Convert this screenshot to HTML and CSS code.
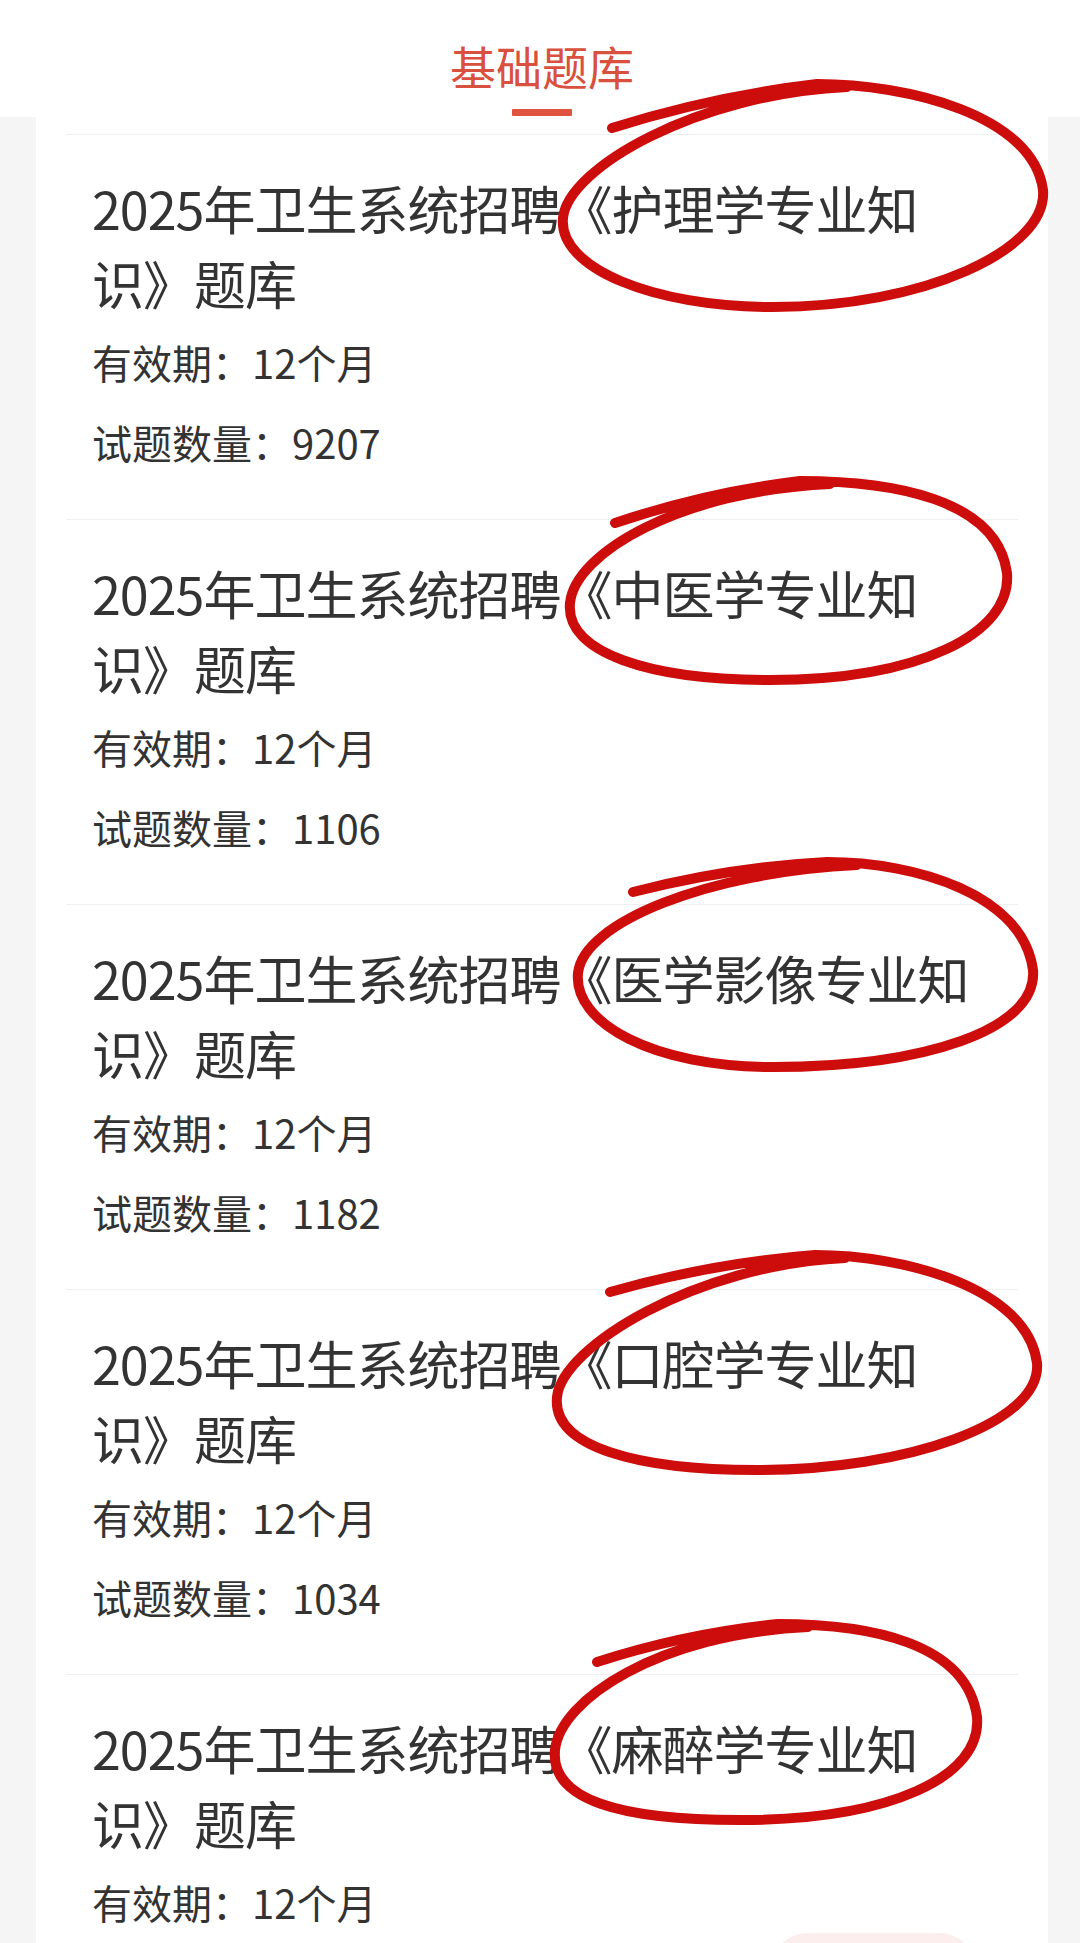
FILE: index.html
```html
<!DOCTYPE html>
<html lang="zh-CN">
<head>
<meta charset="utf-8">
<title>基础题库</title>
<link rel="stylesheet" href="styles.css">
</head>
<body>
<header class="top">
  <div class="top-title">基础题库</div>
  <div class="top-bar"></div>
</header>
<main class="card">
  <div class="item">
    <div class="item-title">2025年卫生系统招聘《护理学专业知识》题库</div>
    <div class="meta">有效期：12个月</div>
    <div class="meta">试题数量：9207</div>
  </div>
  <div class="item">
    <div class="item-title">2025年卫生系统招聘《中医学专业知识》题库</div>
    <div class="meta">有效期：12个月</div>
    <div class="meta">试题数量：1106</div>
  </div>
  <div class="item">
    <div class="item-title">2025年卫生系统招聘《医学影像专业知识》题库</div>
    <div class="meta">有效期：12个月</div>
    <div class="meta">试题数量：1182</div>
  </div>
  <div class="item">
    <div class="item-title">2025年卫生系统招聘《口腔学专业知识》题库</div>
    <div class="meta">有效期：12个月</div>
    <div class="meta">试题数量：1034</div>
  </div>
  <div class="item">
    <div class="item-title">2025年卫生系统招聘《麻醉学专业知识》题库</div>
    <div class="meta">有效期：12个月</div>
    <div class="buy"></div>
  </div>
</main>
<svg class="marks" viewBox="0 0 1080 1943" xmlns="http://www.w3.org/2000/svg">
  <g fill="none" stroke="#cd0c0c" stroke-width="10" stroke-linecap="round" stroke-linejoin="round">
    <path d="M 612 128 Q 714 96 817 84 C 907 84 1033 115 1043 190 C 1048 250 923 307 773 307 C 653 307 558 268 563 218 C 568 168 697 94 847 87"/>
    <path d="M 615 523 Q 707 492 800 481 C 890 481 997 498 1007 573 C 1012 633 920 680 770 680 C 650 680 565 653 570 603 C 575 553 680 491 830 484"/>
    <path d="M 633 892 Q 730 867 827 862 C 917 862 1023 895 1033 970 C 1038 1030 923 1067 773 1067 C 653 1067 573 1023 578 973 C 583 923 707 872 857 865"/>
    <path d="M 610 1292 Q 712 1263 815 1255 C 905 1255 1027 1288 1037 1363 C 1042 1423 907 1470 757 1470 C 637 1470 552 1447 557 1397 C 562 1347 695 1265 845 1258"/>
    <path d="M 597 1662 Q 687 1633 778 1624 C 868 1624 967 1642 977 1717 C 982 1777 890 1820 740 1820 C 620 1820 550 1800 555 1750 C 560 1700 658 1634 808 1627"/>
  </g>
</svg>
</body>
</html>
```
FILE: styles.css
```css
html, body {
  margin: 0;
  padding: 0;
  height: 1943px;
  overflow: hidden;
  background: #f5f5f5;
}
body {
  position: relative;
  font-family: "Noto Sans CJK SC", "Noto Sans", sans-serif;
  color: #333333;
}
.top {
  background: #ffffff;
  padding: 37px 32px 1px 36px;
  display: flex;
  flex-direction: column;
  align-items: center;
}
.top-title {
  font-size: 46px;
  line-height: 56px;
  color: #d9503e;
}
.top-bar {
  width: 60px;
  height: 7px;
  margin-top: 16px;
  background: #e0533f;
  border-radius: 1px;
}
.card {
  background: #ffffff;
  margin: 0 32px 0 36px;
  padding: 17px 30px 0;
  height: 1900px;
}
.item {
  position: relative;
  border-top: 1px solid #efefef;
  padding: 35px 43px 40px 26px;
}
.item-title {
  font-size: 52px;
  letter-spacing: -1px;
  line-height: 75px;
}
.meta {
  font-size: 40px;
  line-height: 74px;
}
.item-title + .meta {
  margin-top: 5px;
}
.meta + .meta {
  margin-top: 6px;
}
.buy {
  position: absolute;
  left: 706px;
  top: 258px;
  width: 203px;
  height: 70px;
  border-radius: 35px;
  background: #fdeeee;
}
.marks {
  position: absolute;
  left: 0;
  top: 0;
  width: 1080px;
  height: 1943px;
  pointer-events: none;
}
```
